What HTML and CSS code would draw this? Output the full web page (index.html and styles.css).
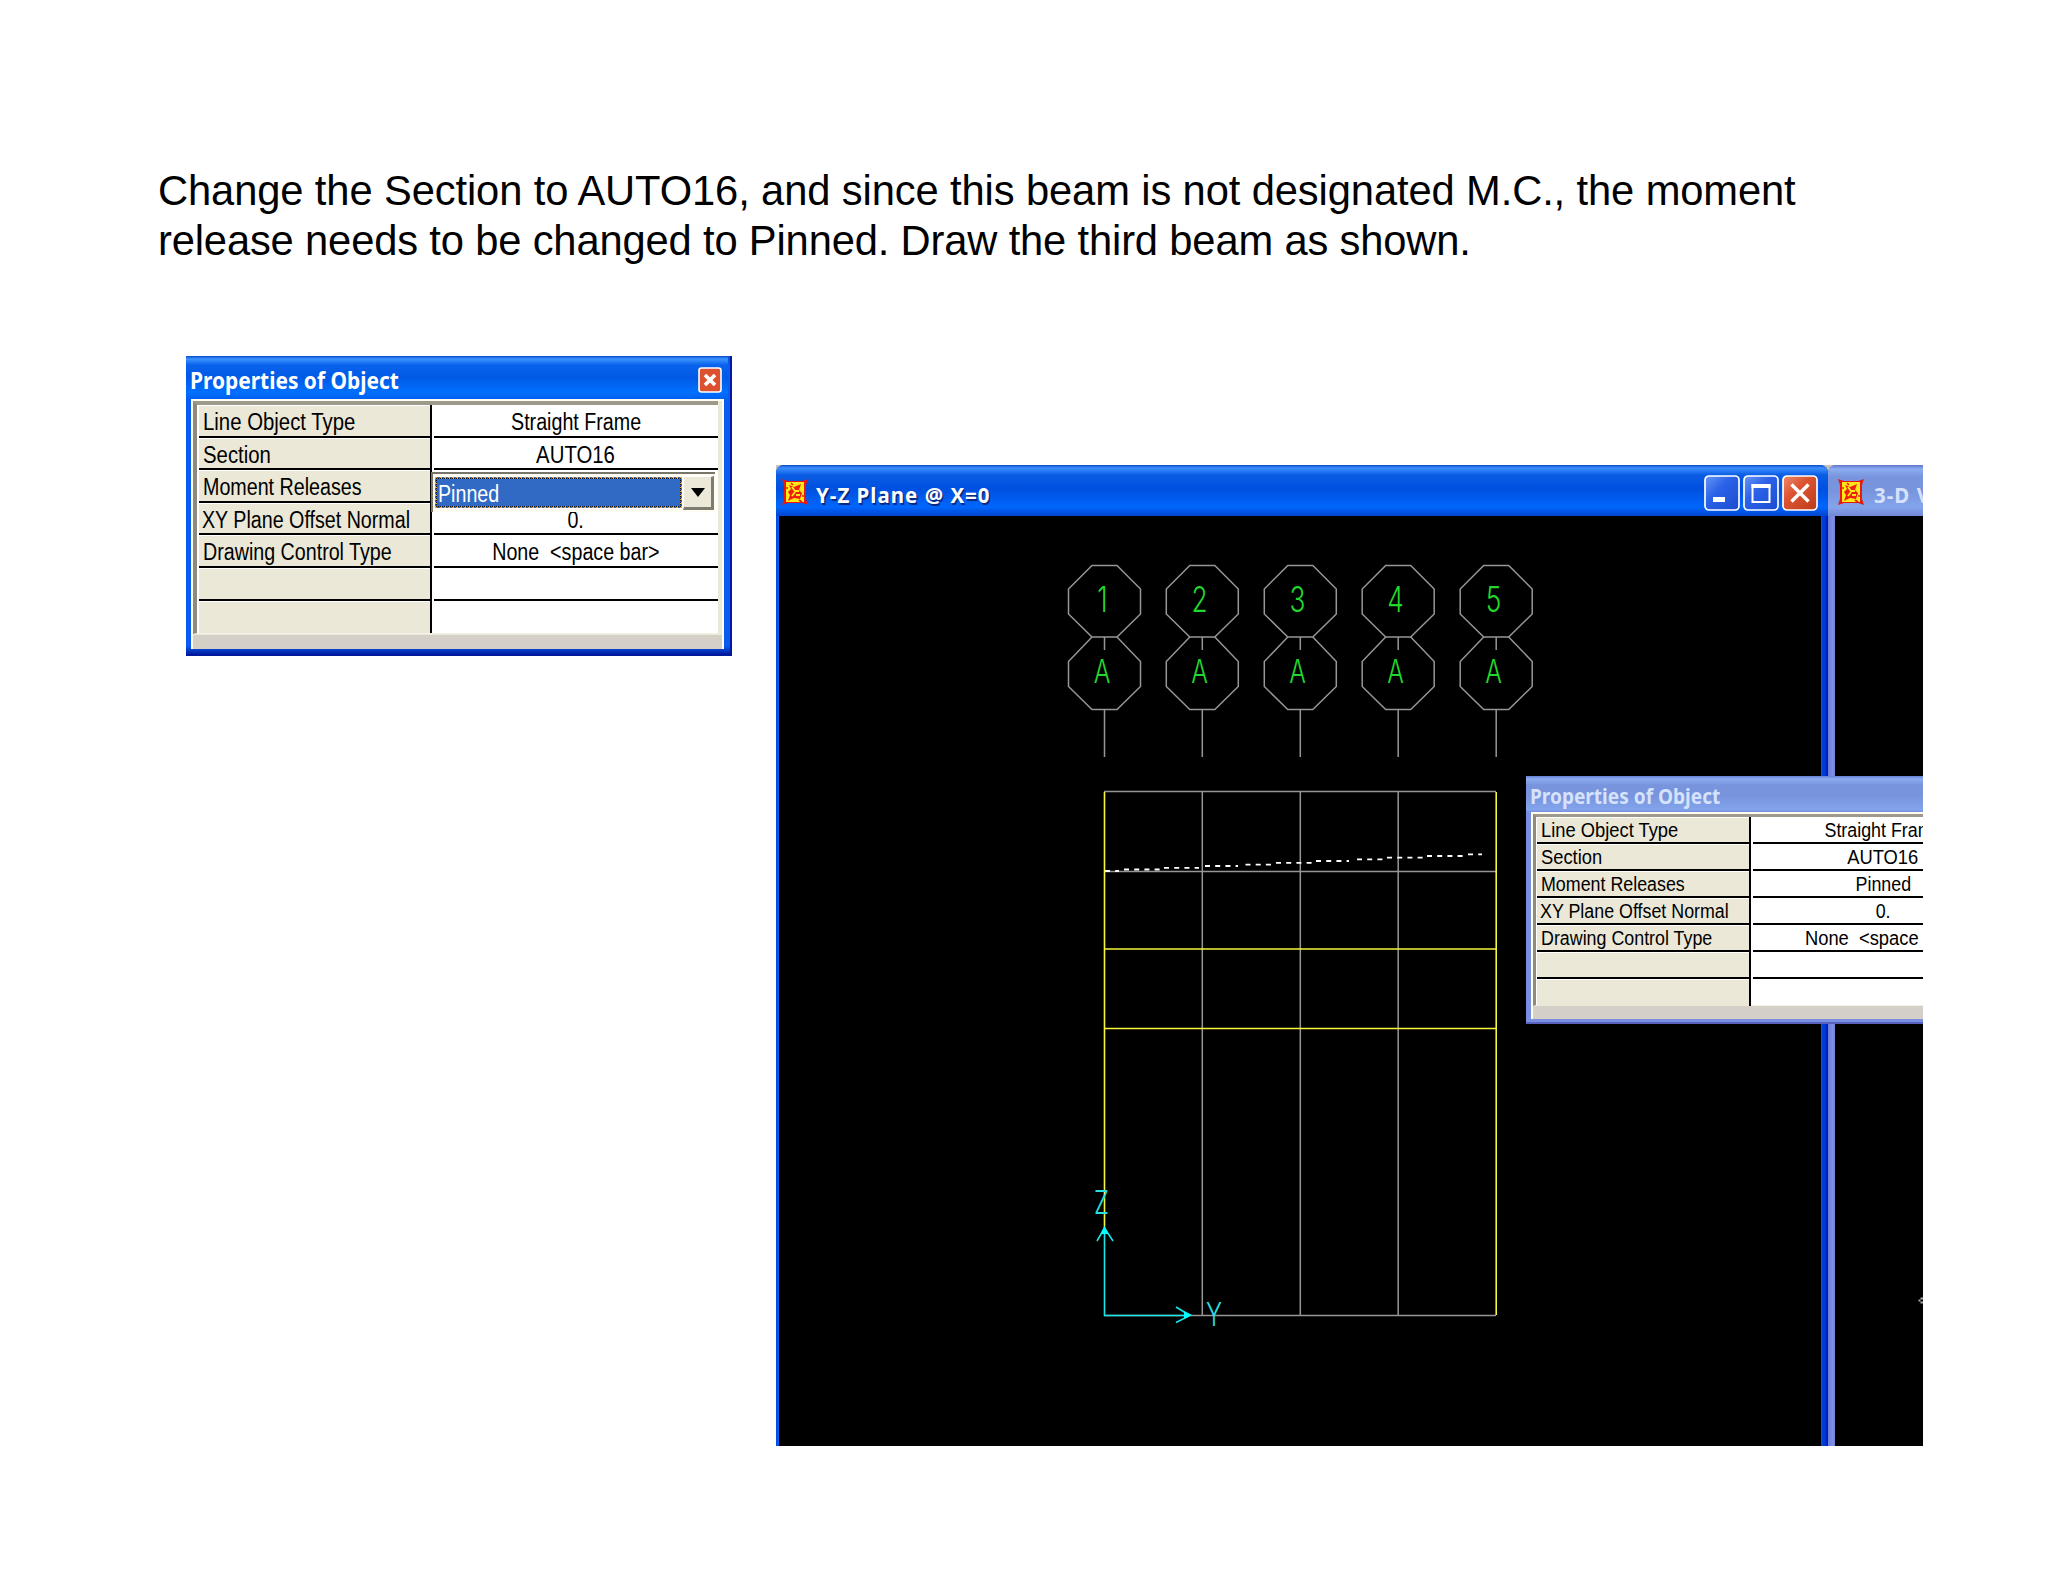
FILE: index.html
```html
<!DOCTYPE html>
<html lang="en">
  <head>
    <meta charset="UTF-8" />
    <meta name="viewport" content="width=device-width, initial-scale=1.0" />
    <title>Draw the third beam</title>
    <link rel="stylesheet" href="styles.css">
  </head>
  <body>
    <p class="instructions"><span class="line-1">Change the Section to AUTO16, and since this beam is not designated M.C., the moment</span><br><span class="line-2">release needs to be changed to Pinned. Draw the third beam as shown.</span></p>

    <div class="figures">
      <div class="dialog">
        <div class="dialog-title">
          <span class="title-text">Properties of Object</span>
          <svg class="dialog-close" viewBox="0 0 24 26">
            <rect x="1" y="1" width="22" height="24" rx="2.5" fill="#dc5230" stroke="#fff" stroke-width="1.6"/>
            <path d="M7 8l10 10M17 8L7 18" stroke="#fff" stroke-width="3.6"/>
          </svg>
        </div>
        <div class="dialog-body">
          <div class="sheet">
            <div class="row"><div class="name"><span class="wide">Line Object Type</span></div><div class="value"><span>Straight Frame</span></div></div>
            <div class="row"><div class="name"><span class="wide">Section</span></div><div class="value"><span class="wide">AUTO16</span></div></div>
            <div class="row"><div class="name"><span>Moment Releases</span></div><div class="value editing"></div></div>
            <div class="row"><div class="name"><span class="xy">XY Plane Offset Normal</span></div><div class="value"><span>0.</span></div></div>
            <div class="row"><div class="name"><span>Drawing Control Type</span></div><div class="value"><span>None&nbsp; &lt;space bar&gt;</span></div></div>
            <div class="row"><div class="name"></div><div class="value"></div></div>
            <div class="row"><div class="name"></div><div class="value"></div></div>
            <div class="combo">
              <div class="combo-text"><span>Pinned</span></div>
              <div class="combo-button"><svg width="14" height="9"><path d="M0 0h14l-7 9z"/></svg></div>
            </div>
          </div>
        </div>
      </div>

      <div class="workspace">
        <div class="view active">
          <div class="view-title">
            <svg class="app-icon" viewBox="0 0 26 26"><use href="#app"/></svg>
            <span class="title-text">Y-Z Plane @ X=0</span>
            <div class="buttons">
              <svg viewBox="0 0 36 36"><rect class="btn" x="1" y="1" width="34" height="34" rx="4"/><path d="M9 24.500h12" stroke="#fff" stroke-width="5"/></svg>
              <svg viewBox="0 0 36 36"><rect class="btn" x="1" y="1" width="34" height="34" rx="4"/><path d="M9.500 10h17v17h-17z" fill="none" stroke="#fff" stroke-width="2"/><path d="M8.500 11h19" stroke="#fff" stroke-width="4"/></svg>
              <svg viewBox="0 0 36 36"><rect class="btn close" x="1" y="1" width="34" height="34" rx="4"/><path d="M9.500 9.500l17 17M26.500 9.500l-17 17" stroke="#fff" stroke-width="3.400"/></svg>
            </div>
          </div>
          <svg class="canvas" width="1042" height="930" viewBox="779 516 1042 930">
            <defs>
              <linearGradient id="blue" x1="0" y1="0" x2="1" y2="1">
                <stop offset="0" stop-color="#6a98f4"/>
                <stop offset=".4" stop-color="#2b62e8"/>
                <stop offset="1" stop-color="#1c4cd0"/>
              </linearGradient>
              <linearGradient id="red" x1="0" y1="0" x2="1" y2="1">
                <stop offset="0" stop-color="#ec8a6c"/>
                <stop offset=".4" stop-color="#dc5430"/>
                <stop offset="1" stop-color="#bc3c1c"/>
              </linearGradient>
              <g id="app">
                <path d="M0 0l6 2h14l6-2-2 6v14l2 6-6-2H6l-6 2 2-6V6z" fill="#e8180c"/>
                <path d="M4 3h18v20H4z" fill="#ffe818"/>
                <path d="M7 6l5 2 7-3-2 6 3 3-2 6-6-1-6 3 2-6-2-3 3-3z" fill="#f02010"/>
                <path d="M10 8l3 4h4M10 17l3-4M14 16h4" stroke="#ffe818" stroke-width="1.800" fill="none"/>
                <path d="M3 9h3M20 17h3M9 4l2 2M17 21l3 2" stroke="#f02010" stroke-width="1.600"/>
              </g>
              <g id="bubble">
                <path d="M-12.500 565.500h25l23.500 23.500v25l-23.500 23h-25l-23.500-23v-25z"/>
                <path d="M-12.500 637l-23.500 24.500v25l23.500 23h25l23.500-23v-25l-23.500-24.500"/>
                <path d="M0 637v13M0 709.500v47.500"/>
              </g>
            </defs>
            <g class="grid">
              <use href="#bubble" x="1104.500"/>
              <use href="#bubble" x="1202.300"/>
              <use href="#bubble" x="1300.300"/>
              <use href="#bubble" x="1398.200"/>
              <use href="#bubble" x="1496.200"/>
              <path d="M1104 791.500h392M1104 871.500h392M1104 1315.500h392M1202.300 791v524M1300.300 791v524M1398.200 791v524"/>
            </g>
            <g class="labels">
              <text x="1102.500" y="612">1</text>
              <text x="1199.500" y="612">2</text>
              <text x="1297.500" y="612">3</text>
              <text x="1395.500" y="612">4</text>
              <text x="1493.500" y="612">5</text>
            </g>
            <g class="labels letters">
              <text x="1102" y="683">A</text>
              <text x="1199.500" y="683">A</text>
              <text x="1297.500" y="683">A</text>
              <text x="1395.500" y="683">A</text>
              <text x="1493.500" y="683">A</text>
            </g>
            <path class="frame" d="M1104.500 792v436M1496.200 792v523M1104 1028.500h392"/>
            <path class="frame" d="M1104 949h392"/>
            <path class="rubber" d="M1105 871h14M1124 869.500h36M1164 867.800h35M1205 866h33M1245.500 864.600h27M1276 862.800h38M1316 861h33M1357 859.300h27M1387 857.600h36M1427 856h37M1468 854.300h14"/>
            <g class="axes">
              <path d="M1104.500 1230v85.500h84"/>
              <path d="M1097 1241l7.500-13 8.500 13M1176 1307l14 8.500-14 7"/>
              <path d="M1104.500 1226l4 8h-8zM1192 1315l-8-4v8z" fill="#0ff" stroke="none"/>
              <text x="1101.500" y="1214">Z</text>
              <text x="1214" y="1326">Y</text>
            </g>
          </svg>
        </div>

        <div class="view inactive">
          <div class="view-title">
            <svg class="app-icon" viewBox="0 0 26 26"><use href="#app"/></svg>
            <span class="title-text">3-D View</span>
          </div>
          <svg class="canvas" width="88" height="930"><path d="M83.500 784.500h2M85.500 782.500h3M85.500 786.500h3" stroke="#aaa" stroke-width="2"/></svg>
        </div>

        <div class="dialog small">
          <div class="dialog-title"><span class="title-text">Properties of Object</span></div>
          <div class="dialog-body">
            <div class="sheet">
              <div class="row"><div class="name"><span class="wide">Line Object Type</span></div><div class="value"><span>Straight Frame</span></div></div>
              <div class="row"><div class="name"><span class="wide">Section</span></div><div class="value"><span class="wide">AUTO16</span></div></div>
              <div class="row"><div class="name"><span>Moment Releases</span></div><div class="value"><span>Pinned</span></div></div>
              <div class="row"><div class="name"><span class="xy">XY Plane Offset Normal</span></div><div class="value"><span>0.</span></div></div>
              <div class="row"><div class="name"><span>Drawing Control Type</span></div><div class="value"><span class="wide">None&nbsp; &lt;space bar&gt;</span></div></div>
              <div class="row"><div class="name"></div><div class="value"></div></div>
              <div class="row"><div class="name"></div><div class="value"></div></div>
            </div>
          </div>
        </div>
      </div>
    </div>
  </body>
</html>
```
FILE: styles.css
```css
* {
    box-sizing: border-box;
}
body {
    margin: 0;
    padding: 166px 0 0 158px;
    width: 2048px;
    height: 1582px;
    overflow: hidden;
    background-color: #fff;
    color: #000;
    font-family: "Liberation Sans", Arial, sans-serif;
}
svg {
    display: block;
    flex: none;
}
.instructions {
    margin: 0;
    height: 190px;
    font-size: 41.7px;
    line-height: 50px;
    white-space: nowrap;
}
.line-1 {
    letter-spacing: -.11px;
}
.line-2 {
    letter-spacing: -.155px;
}
.figures {
    display: flex;
    align-items: flex-start;
    padding-left: 28px;
}

/* property dialogs */
.dialog {
    width: 546px;
    height: 300px;
    flex: none;
    padding: 0 6px 5px 5px;
    background: linear-gradient(#0a4fd0, #0a5cf0 10px, #0a5cf0 290px, #001ea0);
    border-right: 2px solid #0018a0;
    border-bottom: 2px solid #00189c;
    display: flex;
    flex-direction: column;
}
.dialog-title {
    height: 43px;
    flex: none;
    margin: 0 -4px 0 -5px;
    padding: 4px 6px 0 4px;
    display: flex;
    align-items: center;
    justify-content: space-between;
    background: linear-gradient(#0a48c8 0, #3c94ff 3px, #0a62ec 9px, #005ae6 22px, #0070ff 36px, #0060f0 43px);
}
.title-text {
    display: inline-block;
    color: #fff;
    font-family: "Noto Sans", sans-serif;
    font-weight: bold;
    font-size: 22.5px;
    line-height: 30px;
    white-space: nowrap;
    transform-origin: left center;
    transform: translateY(1px) scaleX(.93);
}
.dialog-close {
    width: 24px;
    height: 26px;
}
.dialog-body {
    flex: 1;
    background-color: #d4d0c8;
    border: 2px solid #fffdf0;
    border-bottom: 0;
    padding-right: 4px;
    background-image: linear-gradient(#ece9d8, #ece9d8);
    background-repeat: no-repeat;
    background-size: 100% 234px;
}
.sheet {
    position: relative;
    height: 233px;
    border-top: 4px solid #9d9a8c;
    border-left: 4px solid #8e8b7e;
    border-bottom: 1px solid #f4f2e8;
    background-color: #fff;
}
.row {
    height: 32.6px;
    display: flex;
    padding-left: 2px;
}
.name {
    width: 233px;
    flex: none;
    padding-left: 4px;
    background-color: #ebe8d7;
    border-right: 2px solid #000;
    border-bottom: 2px solid #000;
    box-shadow: inset 0 1px #fff;
}
.value {
    flex: 1;
    margin-left: 2px;
    text-align: center;
    border-bottom: 2px solid #000;
}
.value.editing,
.row:nth-child(7) .name,
.row:nth-child(7) .value {
    border-bottom: 0;
}
.name span,
.value span,
.combo-text span {
    display: inline-block;
    font-size: 23px;
    line-height: 34px;
    white-space: nowrap;
    transform-origin: left center;
    transform: scaleX(.855);
}
.value span {
    transform-origin: center;
}
.name .wide,
.value .wide {
    transform: scaleX(.885);
}
.name .xy {
    margin-left: -1px;
}
.combo {
    position: absolute;
    left: 234px;
    top: 67px;
    width: 284px;
    height: 40px;
    padding: 3px 0 1px 2px;
    display: flex;
    border-top: 2px solid #77746a;
    border-left: 2px solid #77746a;
    background-color: #fffdf2;
}
.combo-text {
    width: 247px;
    height: 31px;
    padding-left: 1px;
    background-color: #316ac5;
    color: #fff;
    border: 2px dotted #e8a850;
    outline: 1px dotted #111;
    outline-offset: -2px;
}
.combo-text span {
    line-height: 30px;
}
.combo-button {
    width: 31px;
    height: 34px;
    margin: -1px 0 0 1px;
    display: flex;
    align-items: center;
    justify-content: center;
    background-color: #ece9d8;
    border: 1px solid #fff;
    border-right: 3px solid #7e7b70;
    border-bottom: 3px solid #7e7b70;
}

/* application screenshot area */
.workspace {
    position: relative;
    width: 1147px;
    height: 981px;
    margin: 109px 0 0 44px;
    overflow: hidden;
    display: flex;
    background-color: #c8c4bc;
}
.view {
    flex: none;
    width: 1052px;
    height: 981px;
    overflow: hidden;
    border-radius: 8px 8px 0 0;
    padding: 0 7px 0 3px;
    background: linear-gradient(90deg, #0048e0 0, #1060f0 3px, #1060f0 1045px, #0040e0 1046px, #0038d8 1049px, #0018a0 1052px);
}
.view-title {
    height: 51px;
    margin: 0 -7px 0 -3px;
    padding: 0 10px 0 6px;
    display: flex;
    align-items: center;
    background: linear-gradient(#0848c8 0, #3c90ff 3px, #0a5ce4 10px, #0050e0 24px, #0066fc 42px, #0044d0 51px);
}
.view-title .title-text {
    font-size: 22px;
    margin: 4px 0 0 8px;
    letter-spacing: 1.1px;
    text-shadow: 1.5px 1.5px #082a80;
}
.view .canvas {
    background-color: #000;
}
.app-icon {
    width: 26px;
    height: 26px;
    margin-top: 2px;
}
.buttons {
    display: flex;
    gap: 3px;
    margin: 4px 0 0 auto;
}
.buttons svg {
    width: 36px;
    height: 36px;
}
.btn {
    fill: url(#blue);
    stroke: #fff;
    stroke-width: 1.7px;
}
.btn.close {
    fill: url(#red);
}
.inactive {
    width: 140px;
    padding: 0 0 0 7px;
    background: linear-gradient(90deg, #6d7ddd, #8090e4 5px, #7080d8 7px);
}
.inactive .view-title {
    margin: 0 0 0 -7px;
    padding-left: 10px;
    background: linear-gradient(#6074cc, #8cacf0 4px, #7894dd 12px, #7894dd 26px, #84a4ec 42px, #7388d4 51px);
}
.inactive .title-text,
.small .title-text {
    color: #d6e2fb;
    text-shadow: none;
}
.inactive .view-title .title-text {
    margin-left: 10px;
    text-shadow: none;
}

/* model drawing */
.grid {
    fill: none;
    stroke: #969696;
    stroke-width: 1.5px;
}
.labels text,
.axes text {
    font-family: Inter, sans-serif;
    font-weight: 300;
    font-size: 35px;
    text-anchor: middle;
    fill: #22d82c;
    stroke: none;
    transform-box: fill-box;
    transform-origin: center;
    transform: scaleX(.75);
}
.letters text {
    font-size: 33px;
    transform: scaleX(.75);
}
.axes text {
    font-size: 32px;
    fill: #2be0e0;
    transform: scaleX(.75);
}
.frame {
    fill: none;
    stroke: #f6f63c;
    stroke-width: 1.6px;
}
.rubber {
    stroke: #fff;
    stroke-width: 1.8px;
    stroke-dasharray: 5 5.2;
}
.axes {
    fill: none;
    stroke: #19e6e6;
    stroke-width: 1.6px;
}

/* unfocused copy, cut off by the edge of the workspace */
.dialog.small {
    position: absolute;
    left: 750px;
    top: 311px;
    width: 454px;
    height: 248px;
    padding: 0 5px 3px 5px;
    background: #7a8ee2;
    border-color: #5a62c0;
}
.small .dialog-title {
    height: 36px;
    background: linear-gradient(#6680d4, #8cacf0 3px, #7894dd 9px, #7894dd 20px, #82a4ec 34px, #748cdc);
}
.small .title-text {
    font-size: 20.5px;
    transform: scaleX(.93);
}
.small .dialog-body {
    background-size: 100% 192px;
}
.small .sheet {
    height: 192px;
    border-top-width: 3px;
    border-left-width: 3px;
}
.small .row {
    height: 27px;
    padding-left: 1px;
}
.small .name {
    width: 214px;
}
.small .value {
    flex: none;
    width: 260px;
    margin-left: 2px;
}
.small .name span,
.small .value span {
    font-size: 19.5px;
    line-height: 27px;
    transform: scaleX(.915);
}
.small .name .wide,
.small .value .wide {
    transform: scaleX(.94);
}
```
